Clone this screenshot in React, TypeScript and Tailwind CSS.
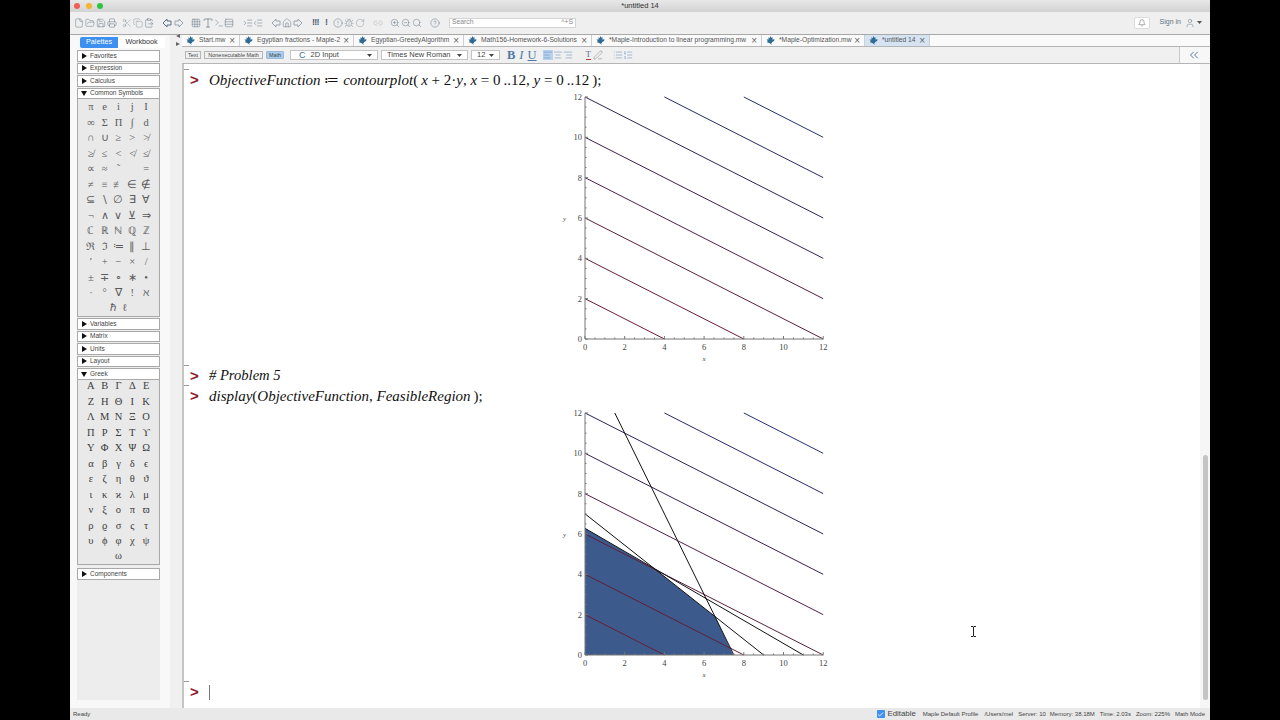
import {
  File, FolderOpen, Save, Printer, Scissors, Copy, ClipboardPaste, Grid3x3, Type, Terminal, Rows3,
  IndentIncrease, IndentDecrease, Home, Bug, RotateCw, Link2, ZoomIn, ZoomOut, Search,
  CircleHelp, CircleAlert, Bell, User, AlignLeft, AlignCenter, AlignRight, PenLine, List, ListOrdered, ChevronsLeft, Check,
} from "lucide-react";
import type { ReactNode } from "react";

const commonSymbols = [
  ["π", "e", "i", "j", "I"],
  ["∞", "Σ", "Π", "∫", "d"],
  ["∩", "∪", "≥", ">", "≯"],
  ["≱", "≤", "<", "≮", "≰"],
  ["∝", "≈", "˜", "", "="],
  ["≠", "≡", "≢", "∈", "∉"],
  ["⊆", "∖", "∅", "∃", "∀"],
  ["¬", "∧", "∨", "⊻", "⇒"],
  ["ℂ", "ℝ", "ℕ", "ℚ", "ℤ"],
  ["ℜ", "ℑ", "≔", "∥", "⊥"],
  ["′", "+", "−", "×", "/"],
  ["±", "∓", "∘", "∗", "•"],
  ["·", "°", "∇", "!", "ℵ"],
];

const greekSymbols = [
  ["Α", "Β", "Γ", "Δ", "Ε"],
  ["Ζ", "Η", "Θ", "Ι", "Κ"],
  ["Λ", "Μ", "Ν", "Ξ", "Ο"],
  ["Π", "Ρ", "Σ", "Τ", "ϒ"],
  ["Υ", "Φ", "Χ", "Ψ", "Ω"],
  ["α", "β", "γ", "δ", "ϵ"],
  ["ε", "ζ", "η", "θ", "ϑ"],
  ["ι", "κ", "ϰ", "λ", "μ"],
  ["ν", "ξ", "ο", "π", "ϖ"],
  ["ρ", "ϱ", "σ", "ς", "τ"],
  ["υ", "ϕ", "φ", "χ", "ψ"],
];

const tabs = [
  { name: "Start.mw", width: "w-[58px]" },
  { name: "Egyptian fractions - Maple-2", width: "w-[114px]" },
  { name: "Egyptian-GreedyAlgorithm", width: "w-[110px]" },
  { name: "Math156-Homework-6-Solutions", width: "w-[128px]" },
  { name: "*Maple-Introduction to linear programming.mw", width: "w-[170px]" },
  { name: "*Maple-Optimization.mw", width: "w-[103px]" },
  { name: "*untitled 14", width: "w-[65px]", active: true },
];

function MapleLeaf() {
  return (
    <svg width="9" height="9" viewBox="0 0 10 10" className="shrink-0">
      <path d="M5 0 L6 2 L7.5 1.5 L7 4 L9.5 3.5 L9 5.5 L6.5 7 L7 8 L5.5 7.5 L6.5 10 L5 8.5 L3 7.5 L1 7 L2 5.5 L0.5 4 L3 4 L2.5 1.5 L4 2.5 Z" fill="#2d6a94" />
    </svg>
  );
}

function Tri({ open }: { open?: boolean }) {
  return (
    <svg width="6" height="6" viewBox="0 0 6 6" className="shrink-0">
      <path d={open ? "M0 1 L6 1 L3 6 Z" : "M1 0 L6 3 L1 6 Z"} fill="#111" />
    </svg>
  );
}

function PaletteHeader({ title, open, className }: { title: string; open?: boolean; className?: string }) {
  return (
    <div className={`flex h-[11.5px] shrink-0 items-center gap-[3px] border border-[#a9a9a9] bg-white pl-[3px] text-[6.5px] text-[#444] ${className ?? ""}`}>
      <Tri open={open} />
      {title}
    </div>
  );
}

function SymbolGrid({ rows, last, tone, inner }: { rows: string[][]; last: string[]; tone: string; inner?: string }) {
  return (
    <div className={`border-x border-b border-[#a9a9a9] bg-[#e9e9e9] px-[6px] font-['Liberation_Serif',serif] text-[10.5px] ${tone}`}>
      <div className={inner}>
        {rows.map((row, i) => (
          <div key={i} className="grid h-[15.5px] grid-cols-5 items-center text-center">
            {row.map((s, j) => (
              <span key={j}>{s}</span>
            ))}
          </div>
        ))}
        <div className="flex h-[15.5px] items-center justify-center gap-[6px]">
          {last.map((s) => (
            <span key={s}>{s}</span>
          ))}
        </div>
      </div>
    </div>
  );
}

const icon = { size: 10, strokeWidth: 1.15, color: "#5f6f80" };

// hollow block arrow, used for undo/redo and back/forward
function BlockArrow({ flip, faded }: { flip?: boolean; faded?: boolean }) {
  return (
    <svg width="10" height="10" viewBox="0 0 10 10" className={flip ? "-scale-x-100" : ""}>
      <path d="M5 1 L1 5 L5 9 V7 H9 V3 H5 Z" fill="none" stroke={faded ? "#9aa5b0" : "#5f6f80"} strokeWidth="1" />
    </svg>
  );
}

function Toolbar() {
  return (
    <div className="flex h-[23px] shrink-0 items-center border-b border-[#a8a8a8] bg-[#efefef] pb-[1px] pl-[4px]">
      <div className="flex gap-[1px]">
        <File {...icon} />
        <FolderOpen {...icon} />
        <Save {...icon} />
        <Printer {...icon} />
      </div>
      <div className="ml-[5px] flex gap-[1px]">
        <Scissors {...icon} color="#8a949e" />
        <Copy {...icon} color="#8a949e" />
        <ClipboardPaste {...icon} />
      </div>
      <div className="ml-[8px] flex gap-[2px]">
        <BlockArrow />
        <BlockArrow flip faded />
      </div>
      <div className="ml-[7px] flex items-center">
        <Grid3x3 {...icon} className="mr-[1px]" />
        <Type {...icon} size={12} color="#4f6478" />
        <Terminal {...icon} />
        <Rows3 {...icon} />
      </div>
      <div className="ml-[9px] flex">
        <IndentIncrease {...icon} />
        <IndentDecrease {...icon} />
      </div>
      <div className="ml-[8px] flex gap-[1px]">
        <BlockArrow faded />
        <Home {...icon} />
        <BlockArrow flip faded />
      </div>
      <div className="ml-[9px] flex items-center font-['Liberation_Sans',sans-serif] text-[9px] leading-none font-bold text-[#4f6478]">
        <span className="w-[8px] tracking-[-0.8px]">!!!</span>
        <span className="ml-[5px] w-[4px]">!</span>
        <CircleAlert {...icon} className="ml-[4px]" />
        <Bug {...icon} className="ml-[1px]" color="#8a949e" />
        <RotateCw {...icon} className="ml-[1px]" color="#8a949e" />
      </div>
      <div className="ml-[8px]">
        <Link2 {...icon} color="#aab2ba" />
      </div>
      <div className="ml-[7px] flex gap-[1px]">
        <ZoomIn {...icon} />
        <ZoomOut {...icon} />
        <Search {...icon} />
      </div>
      <div className="ml-[8px]">
        <CircleHelp {...icon} />
      </div>
      <div className="ml-[9px] flex h-[10px] w-[127px] items-center justify-between border border-[#d4d4d4] bg-white px-[2px] text-[6.8px] text-[#8a8a8a]">
        <span>Search</span>
        <span>^+S</span>
      </div>
      <div className="ml-auto flex h-[12px] w-[16px] items-center justify-center rounded-[2px] border border-[#dcdcdc] bg-white">
        <Bell size={8} strokeWidth={1.3} color="#444" />
      </div>
      <span className="ml-[10px] text-[7px] text-[#5f7286]">Sign in</span>
      <User size={10} strokeWidth={1.1} color="#5f7286" className="ml-[4px]" />
      <svg width="5" height="3" viewBox="0 0 5 3" className="mr-[8px] ml-[2px]">
        <path d="M0 0 L5 0 L2.5 3 Z" fill="#555" />
      </svg>
    </div>
  );
}

function Palettes() {
  return (
    <aside className="flex w-[112px] shrink-0 bg-[#f4f4f4]">
      <div className="flex w-[100px] flex-col bg-white/40 pt-[2px] pl-[7px]">
        <div className="ml-[3px] flex h-[11px] text-[7.2px]">
          <div className="flex w-[38px] items-center justify-center rounded-l-[2px] bg-[#3d8ff0] text-white">Palettes</div>
          <div className="flex w-[47px] items-center justify-center rounded-r-[2px] bg-white text-[#333]">Workbook</div>
        </div>
        <div className="mt-[2px] mb-[8px] flex w-[83px] flex-1 flex-col bg-[#ededed]">
          <PaletteHeader title="Favorites" className="mb-[1px]" />
          <PaletteHeader title="Expression" className="mb-[1px]" />
          <PaletteHeader title="Calculus" className="mb-[1px]" />
          <PaletteHeader title="Common Symbols" open />
          <SymbolGrid rows={commonSymbols} last={["ℏ", "ℓ"]} tone="text-[#5a5a5a]" />
          <PaletteHeader title="Variables" className="mt-[1px] mb-[1px]" />
          <PaletteHeader title="Matrix" className="mb-[1px]" />
          <PaletteHeader title="Units" className="mb-[1px]" />
          <PaletteHeader title="Layout" className="mb-[1px]" />
          <PaletteHeader title="Greek" open />
          <SymbolGrid rows={greekSymbols} last={["ω"]} tone="text-[#3c3c3c]" inner="-mt-[1.5px]" />
          <PaletteHeader title="Components" className="mt-[3px]" />
        </div>
      </div>
      <div className="relative flex-1 bg-[#f0f0f0]">
        <svg width="4" height="12" viewBox="0 0 4 12" className="absolute top-[-1px] right-[2px]">
          <path d="M4 0 L0 2 L4 4 Z M0 8 L4 10 L0 12 Z" fill="#666" />
        </svg>
      </div>
    </aside>
  );
}

function TabBar() {
  return (
    <div className="flex h-[11px] shrink-0 bg-[#fafafa] text-[6.7px] text-[#555]">
      {tabs.map((t) => (
        <div key={t.name} className={`flex items-center border-r border-[#cfcfcf] pl-[4px] whitespace-nowrap ${t.width} ${t.active ? "bg-[#d5e3f3]" : ""}`}>
          <MapleLeaf />
          <span className="ml-[4px] flex-1 overflow-hidden">{t.name}</span>
          <span className="mr-[4px] text-[10px] leading-none text-[#666]">×</span>
        </div>
      ))}
    </div>
  );
}

function Select({ width, children }: { width: string; children: ReactNode }) {
  return (
    <div className={`flex h-[10px] items-center justify-between border border-[#c4c4c4] bg-white px-[5px] text-[7.5px] text-[#444] ${width}`}>
      {children}
      <svg width="5" height="3" viewBox="0 0 5 3">
        <path d="M0 0 L5 0 L2.5 3 Z" fill="#444" />
      </svg>
    </div>
  );
}

function FormatBar() {
  const blue = { size: 10, strokeWidth: 1.2, color: "#5f86b0" };
  return (
    <div className="flex h-[18px] shrink-0 items-center border-y border-[#b5b5b5] bg-[#f0f0f0] pl-[3px] text-[5.5px] text-[#444]">
      <span className="flex h-[8px] w-[16px] items-center justify-center border border-[#b5b5b5]">Text</span>
      <span className="ml-[3px] flex h-[8px] w-[59px] items-center justify-center border border-[#b5b5b5] whitespace-nowrap">Nonexecutable Math</span>
      <span className="ml-[3px] flex h-[8px] w-[18px] items-center justify-center rounded-[1px] border border-[#9ab8d8] bg-[#a9cdee]">Math</span>
      <div className="ml-[6px]">
        <Select width="w-[88px]">
          <span className="flex items-center gap-[5px] pl-[3px]">
            <span className="text-[9px] leading-none text-[#3d6f9e]">C</span>2D Input
          </span>
        </Select>
      </div>
      <div className="ml-[3px]">
        <Select width="w-[87px]">Times New Roman</Select>
      </div>
      <div className="ml-[3px]">
        <Select width="w-[29px]">12</Select>
      </div>
      <div className="ml-[7px] flex items-center gap-[4px] font-['Liberation_Serif',serif] text-[12.5px] leading-none text-[#4f79a6]">
        <span className="font-bold">B</span>
        <span className="italic">I</span>
        <span className="underline">U</span>
      </div>
      <div className="ml-[6px] flex">
        <AlignLeft {...blue} className="bg-[#b7d2ee]" />
        <AlignCenter {...blue} />
        <AlignRight {...blue} />
      </div>
      <div className="ml-[13px] flex items-center gap-[2px]">
        <span className="border-b border-[#c0392b] font-['Liberation_Serif',serif] text-[9px] leading-[9px] text-[#5f7286]">T</span>
        <PenLine {...blue} color="#7a8088" />
      </div>
      <div className="ml-[10px] flex">
        <List {...blue} />
        <ListOrdered {...blue} />
      </div>
      <div className="ml-auto flex h-full w-[31px] items-center justify-center border-l border-[#c8c8c8] bg-[#f7f7f7] pr-[3px]">
        <ChevronsLeft size={14} strokeWidth={1.4} color="#3f5f82" />
      </div>
    </div>
  );
}

function Row({ children, tick }: { children?: ReactNode; tick?: boolean }) {
  return (
    <div className="relative flex h-[20px] shrink-0 items-center pl-[6px] font-['Liberation_Serif',serif] text-[15px] whitespace-nowrap text-[#111] italic">
      {tick && <span className="absolute top-[-1px] left-0 h-px w-[5px] bg-[#999]" />}
      <span className="w-[19px] font-['Liberation_Sans',sans-serif] text-[15px] font-bold text-[#8b1a2a] not-italic">&gt;</span>
      {children}
    </div>
  );
}

const sx = (x: number) => 20 + x * 19.85;
const sy = (y: number) => 249 - y * 20.17;

const contours: [number, number, number, number, string][] = [
  [0, 2, 4, 0, "#6e1c32"],
  [0, 4, 8, 0, "#651d38"],
  [0, 6, 12, 0, "#5c1e3e"],
  [0, 8, 12, 2, "#521f45"],
  [0, 10, 12, 4, "#38204f"],
  [0, 12, 12, 6, "#2a2458"],
  [4, 12, 12, 8, "#262a66"],
  [8, 12, 12, 10, "#24306f"],
];

function Plot({ feasible }: { feasible?: boolean }) {
  const major = [0, 2, 4, 6, 8, 10, 12];
  const minor = Array.from({ length: 25 }, (_, i) => i / 2);
  return (
    <svg width="275" height="276" viewBox="0 0 275 276" className="ml-[381px] block shrink-0 overflow-visible font-['Liberation_Serif',serif]">
      {feasible && (
        <path
          d={`M${sx(0)} ${sy(0)} L${sx(0)} ${sy(6.28)} L${sx(3.6)} ${sy(4.2)} L${sx(6.57)} ${sy(1.89)} L${sx(7.47)} ${sy(0)} Z`}
          fill="#3c5a8c"
        />
      )}
      {contours.map(([a, b, c, d, col], i) => (
        <line key={i} x1={sx(a)} y1={sy(b)} x2={sx(c)} y2={sy(d)} stroke={col} strokeWidth="1" />
      ))}
      {feasible && (
        <g stroke="#111" strokeWidth="1">
          <line x1={sx(1.5)} y1={sy(12)} x2={sx(7.5)} y2={sy(0)} />
          <line x1={sx(0)} y1={sy(7)} x2={sx(9)} y2={sy(0)} />
          <line x1={sx(0)} y1={sy(6.28)} x2={sx(11)} y2={sy(0)} />
        </g>
      )}
      <g stroke="#777" strokeWidth="1">
        <line x1={sx(0)} y1={sy(0)} x2={sx(12)} y2={sy(0)} />
        <line x1={sx(0)} y1={sy(0)} x2={sx(0)} y2={sy(12)} />
        {minor.map((t) => (
          <g key={t}>
            <line x1={sx(t)} y1={sy(0)} x2={sx(t)} y2={sy(0) + (t % 2 === 0 ? -3 : -1.5)} />
            <line x1={sx(0)} y1={sy(t)} x2={sx(0) + (t % 2 === 0 ? 3 : 1.5)} y2={sy(t)} />
          </g>
        ))}
      </g>
      <g fontSize="8.5" fill="#444">
        {major.map((t) => (
          <g key={t}>
            <text x={sx(t)} y={sy(0) + 11} textAnchor="middle">{t}</text>
            <text x={sx(0) - 3} y={sy(t) + 3} textAnchor="end">{t}</text>
          </g>
        ))}
      </g>
      <text x={sx(6)} y="271" fontSize="7" fontStyle="italic" fill="#444" textAnchor="middle">x</text>
      <text x="-2" y="131" fontSize="7" fontStyle="italic" fill="#444">y</text>
    </svg>
  );
}

function Document() {
  return (
    <main className="relative flex min-h-0 flex-1 bg-white">
      <div className="flex min-w-0 flex-1 flex-col overflow-hidden border-l-2 border-[#c4c4c4]">
        <div className="mt-[-14px]" />
        <Row>
          <span className="text-[14.6px]"># Problem 4</span>
        </Row>
        <Row tick>
          <span>ObjectiveFunction</span>
          <span className="not-italic">&nbsp;≔&nbsp;</span>
          <span>contourplot</span>
          <span className="not-italic">(&thinsp;</span>
          <span>x</span>
          <span className="not-italic">&nbsp;+&nbsp;2·</span>
          <span>y</span>
          <span className="not-italic">,&nbsp;</span>
          <span>x</span>
          <span className="not-italic">&nbsp;=&nbsp;0&thinsp;..12,&nbsp;</span>
          <span>y</span>
          <span className="not-italic">&nbsp;=&nbsp;0&thinsp;..12</span>
          <span className="not-italic">&thinsp;);</span>
        </Row>
        <Plot />
        <Row tick>
          <span className="text-[14.6px]"># Problem 5</span>
        </Row>
        <Row tick>
          <span>display</span>
          <span className="not-italic">(</span>
          <span>ObjectiveFunction</span>
          <span className="not-italic">,&nbsp;</span>
          <span>FeasibleRegion</span>
          <span className="not-italic">&thinsp;);</span>
        </Row>
        <Plot feasible />
        <Row tick>
          <span className="h-[15px] w-px bg-[#777]" />
        </Row>
      </div>
      <div className="flex w-[10px] shrink-0 flex-col bg-[#f6f6f6] pt-[391px] pb-[8px]">
        <div className="mx-auto w-[5px] flex-1 rounded-full bg-[#c4c4c4]" />
      </div>
      {/* mouse cursor */}
      <svg width="7" height="11" viewBox="0 0 7 11" className="absolute top-[562px] left-[788px]">
        <path d="M1 .5 H3 L3.5 1 L4 .5 H6 M3.5 1 V10 M1 10.5 H3 L3.5 10 L4 10.5 H6" fill="none" stroke="#222" strokeWidth="1" />
      </svg>
    </main>
  );
}

function StatusBar() {
  return (
    <footer className="flex h-[12px] shrink-0 items-center bg-[#e9e9e9] pl-[3px] text-[6px] whitespace-nowrap text-[#444]">
      <span>Ready</span>
      <span className="ml-auto flex h-[8px] w-[8px] items-center justify-center rounded-[1px] bg-[#3d8ff0]">
        <Check size={7} strokeWidth={3} color="#fff" />
      </span>
      <span className="ml-[3px] text-[7.8px]">Editable</span>
      <span className="ml-[7px]">Maple Default Profile</span>
      <span className="ml-[6px]">/Users/mel</span>
      <span className="ml-[5px]">Server: 10</span>
      <span className="ml-[4px]">Memory: 38.18M</span>
      <span className="ml-[5px]">Time: 2.03s</span>
      <span className="ml-[5px]">Zoom: 225%</span>
      <span className="mr-[5px] ml-[5px]">Math Mode</span>
    </footer>
  );
}

export default function App() {
  return (
    <div className="flex h-[720px] w-[1280px] justify-center overflow-hidden bg-black font-['Liberation_Sans',sans-serif]">
      <div className="flex w-[1140px] flex-col bg-[#efefef]">
        <header className="relative flex h-[12px] shrink-0 items-center justify-center bg-gradient-to-b from-[#e8e8e8] to-[#d2d2d2] text-[7.5px] text-[#333]">
          <div className="absolute top-[3px] left-[4px] flex gap-[5.5px]">
            <span className="h-[6px] w-[6px] rounded-full bg-[#ef5f57]" />
            <span className="h-[6px] w-[6px] rounded-full bg-[#f5b52e]" />
            <span className="h-[6px] w-[6px] rounded-full bg-[#2fc440]" />
          </div>
          *untitled 14
        </header>
        <Toolbar />
        <div className="flex min-h-0 flex-1">
          <Palettes />
          <div className="flex min-w-0 flex-1 flex-col">
            <TabBar />
            <FormatBar />
            <Document />
          </div>
        </div>
        <StatusBar />
      </div>
    </div>
  );
}
